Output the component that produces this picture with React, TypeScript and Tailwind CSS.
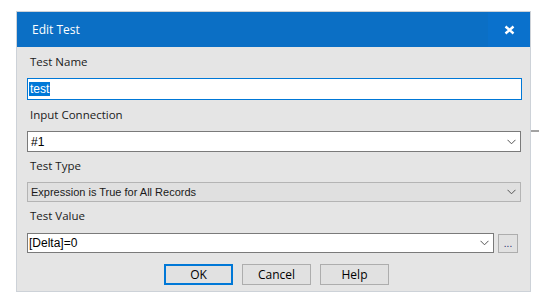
import React from 'react'

// ── Small pieces ─────────────────────────────────────────────────────

const ui = { fontFamily: '"Open Sans", "Noto Sans", sans-serif' }
const arial = { fontFamily: '"Liberation Sans", Arial, sans-serif' }

function Chevron({ className = '' }: { className?: string }) {
  return (
    <svg width="9" height="6" viewBox="0 0 9 6" className={className}>
      <path d="M0.5 0.8 L4.5 4.8 L8.5 0.8" fill="none" stroke="#555" strokeWidth="1" />
    </svg>
  )
}

function Label({ text, className = '' }: { text: string; className?: string }) {
  return (
    <div className={`h-[18px] flex items-center pl-[3px] text-[11.5px] text-[#1a1a1a] ${className}`} style={ui}>
      {text}
    </div>
  )
}

function DlgButton({ label, primary }: { label: string; primary?: boolean }) {
  return (
    <button
      className={`w-[69px] h-[21px] bg-[#e1e1e1] text-[12px] text-black flex items-center justify-center ${
        primary ? 'border-2 border-[#0078d7]' : 'border border-[#adadad]'
      }`}
      style={ui}
    >
      {label}
    </button>
  )
}

// ── App ──────────────────────────────────────────────────────────────

export default function App() {
  return (
    <div className="relative w-[539px] h-[294px] bg-white overflow-hidden">
      {/* window behind the dialog */}
      <div className="absolute left-[531px] top-[130px] w-[8px] h-[2px] bg-[#a3a3a3]" />

      <div className="ml-[16px] mt-[11px] w-[515px] h-[281px] border border-[#cdd2d8] bg-[#e5e5e5] flex flex-col">
        {/* title bar */}
        <div className="h-[35px] bg-[#0b6fc5] flex items-center justify-between">
          <span className="pl-[15px] text-[12px] text-white" style={ui}>Edit Test</span>
          <div className="w-[42px] h-full flex items-center justify-center bg-[#0a71cc]">
            <svg width="11" height="10" viewBox="0 0 11 10">
              <path d="M1.5 1.5 L9.5 8.5 M9.5 1.5 L1.5 8.5" stroke="white" strokeWidth="2.4" />
            </svg>
          </div>
        </div>

        {/* body */}
        <div className="pl-[10px] pr-[8px] flex flex-col">
          <Label text="Test Name" className="mt-[6px]" />
          <div className="mt-[7px] h-[22px] bg-white border border-[#0078d7] flex items-center pl-[1px]">
            <span className="bg-[#0078d7] text-white text-[12px] leading-[14px] px-[1px]" style={arial}>test</span>
          </div>

          <Label text="Input Connection" className="mt-[6px]" />
          <div className="mt-[7px] h-[21px] mr-[1px] bg-white border border-[#7a7a7a] flex items-center justify-between pl-[3px] pr-[4px]">
            <span className="text-[12px] text-black" style={arial}>#1</span>
            <Chevron />
          </div>

          <Label text="Test Type" className="mt-[5px]" />
          <div className="mt-[7px] h-[20px] mr-[1px] bg-[#e0e0e0] border border-[#b4b4b4] flex items-center justify-between pl-[3px] pr-[4px]">
            <span className="text-[11px] text-[#1a1a1a]" style={arial}>Expression is True for All Records</span>
            <Chevron />
          </div>

          <Label text="Test Value" className="mt-[5px]" />
          <div className="mt-[8px] flex items-center gap-[4px]">
            <div className="w-[467px] h-[20px] bg-white border border-[#7a7a7a] flex items-center justify-between pl-[1px] pr-[4px]">
              <span className="text-[12px] text-black" style={arial}>[Delta]=0</span>
              <Chevron />
            </div>
            <div className="w-[20px] h-[19px] bg-[#e1e1e1] border border-[#adadad] flex items-end justify-center pb-[3px]">
              <span className="text-[10px] leading-none text-[#1c2b6b]" style={arial}>...</span>
            </div>
          </div>

          <div className="mt-[11px] flex justify-center gap-[9px] pl-[4px]">
            <DlgButton label="OK" primary />
            <DlgButton label="Cancel" />
            <DlgButton label="Help" />
          </div>
        </div>
      </div>
    </div>
  )
}
